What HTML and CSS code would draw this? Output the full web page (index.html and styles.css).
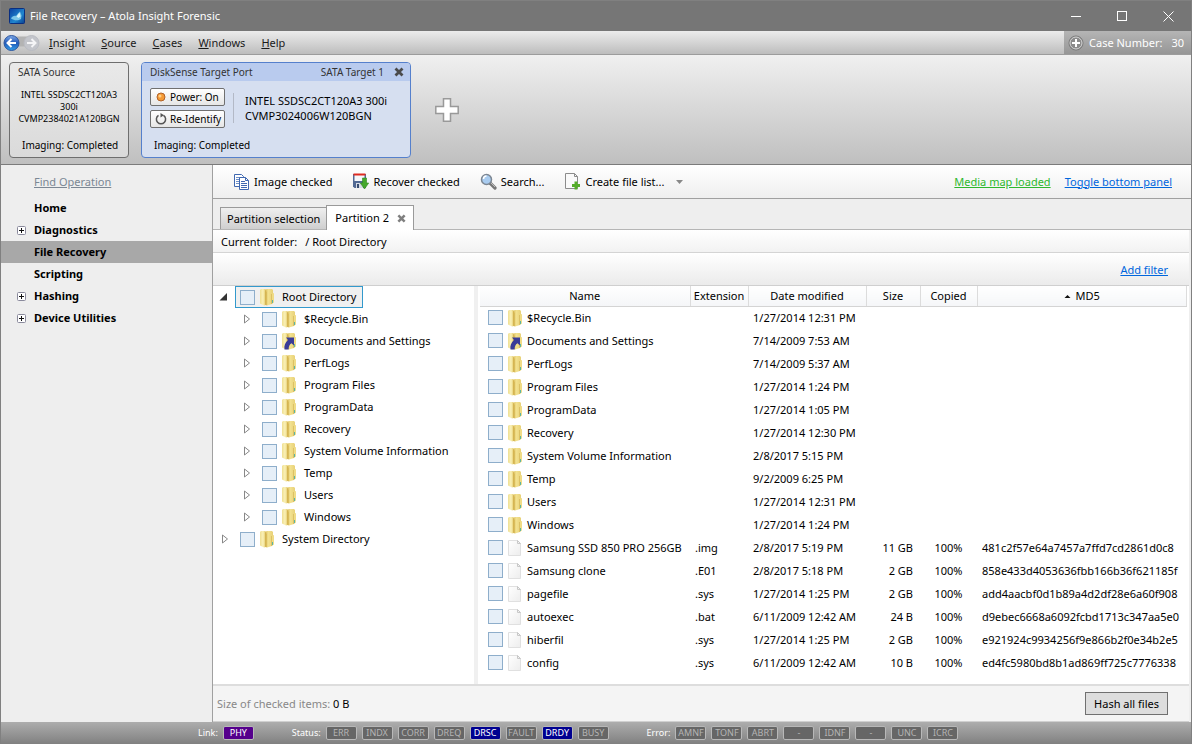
FILE: index.html
```html
<!DOCTYPE html>
<html lang="en">
  <head>
    <meta charset="UTF-8" />
    <meta name="viewport" content="width=device-width, initial-scale=1.0" />
    <title>File Recovery – Atola Insight Forensic</title>
    <link rel="stylesheet" href="styles.css">
  </head>
  <body>
    <!-- Icon sprite -->
    <svg class="sprite" width="0" height="0" aria-hidden="true">
      <defs>
        <linearGradient id="gold" x1="0" x2="1" y1="0" y2="0">
          <stop offset="0" stop-color="#efdf92" />
          <stop offset="0.5" stop-color="#faf1b8" />
          <stop offset="1" stop-color="#e0c560" />
        </linearGradient>
        <linearGradient id="goldDark" x1="0" x2="1" y1="0" y2="0">
          <stop offset="0" stop-color="#d6b652" />
          <stop offset="0.4" stop-color="#f3e290" />
          <stop offset="1" stop-color="#e8d178" />
        </linearGradient>
        <linearGradient id="paper" x1="0" x2="1" y1="0" y2="1">
          <stop offset="0" stop-color="#ffffff" />
          <stop offset="1" stop-color="#ededed" />
        </linearGradient>
        <linearGradient id="blueBall" x1="0" x2="0" y1="0" y2="1">
          <stop offset="0" stop-color="#7fa9e6" />
          <stop offset="0.5" stop-color="#2058b8" />
          <stop offset="1" stop-color="#35a0e8" />
        </linearGradient>
        <linearGradient id="appBlue" x1="0" x2="1" y1="0" y2="1">
          <stop offset="0" stop-color="#0b3fa0" />
          <stop offset="0.6" stop-color="#1f86cf" />
          <stop offset="1" stop-color="#0a3f8e" />
        </linearGradient>
      </defs>
      <symbol id="folder" viewBox="0 0 16 18">
        <path d="M1 2L2 1H6L7 2V17L5 17.500 1 15.500z" fill="url(#gold)" />
        <path d="M6 2L8 1h5l1 1V15l-1 1-5 1.500-2-1z" fill="url(#goldDark)" />
        <path d="M6 2.500L8 4V17.500L6 16.500z" fill="#d0ae48" opacity=".5" />
        <path d="M12 6l3-1V14.500L12 16z" fill="#f0dc86" />
        <path d="M12.500 6v10" stroke="#dcc164" />
        <path d="M13 12h1v3h-1z" fill="#5bb5a5" />
      </symbol>
      <symbol id="folder-link" viewBox="0 0 16 18">
        <use href="#folder" width="16" height="18" />
        <path d="M5 5.500h8v8l-2.500-2.300C8.500 12.500 7.500 14.500 7.600 17.500H3.500C2.800 13.500 4.300 10.700 7 8z" fill="#3a3c98" />
      </symbol>
      <symbol id="file" viewBox="0 0 16 18">
        <path d="M1.500 1.500H10.500L13.500 4.500V16.500H1.500z" fill="url(#paper)" stroke="#e0e0e0" />
        <path d="M10.500 1.500v3h3z" fill="#f4f4f4" stroke="#c8c8c8" />
      </symbol>
      <symbol id="closed" viewBox="0 0 10 11">
        <path d="M3.500 1V9L8.500 5z" fill="#fff" stroke="#888" />
      </symbol>
      <symbol id="opened" viewBox="0 0 10 11">
        <path d="M8 1V8.500H0.500z" fill="#333" />
      </symbol>
      <symbol id="cross" viewBox="0 0 10 10">
        <path d="M1.500 1.500l7 7M8.500 1.500l-7 7" stroke="currentColor" stroke-width="2.800" fill="none" />
      </symbol>
      <symbol id="expand" viewBox="0 0 9 9">
        <rect x="0.500" y="0.500" width="8" height="8" rx="1" fill="#fff" stroke="#8a8a9c" />
        <path d="M2 4.500h5M4.500 2v5" stroke="#111" />
      </symbol>
    </svg>

    <header class="titlebar">
      <svg class="app-icon" viewBox="0 0 16 16" aria-hidden="true">
        <rect x="0.500" y="0.500" width="15" height="15" rx="1" fill="url(#appBlue)" stroke="#0a2f80" />
        <path d="M2 10.500C3 8.500 5 7.500 7 8L9 5.500 11 3.500l1.500 4-.5 3.500C9 13 5 12.500 2 10.500z" fill="#7cc6e8" />
        <path d="M7.500 8.500L10.500 4.500l1 4-2 1.500z" fill="#d8f5fc" />
      </svg>
      <h1>File Recovery – Atola Insight Forensic</h1>
      <div class="window-buttons">
        <button type="button" aria-label="Minimize">
          <svg width="11" height="11"><path d="M0 5.500h10" stroke="#fff" /></svg>
        </button>
        <button type="button" aria-label="Maximize">
          <svg width="11" height="11"><rect x="0.500" y="0.500" width="9" height="9" fill="none" stroke="#fff" /></svg>
        </button>
        <button type="button" aria-label="Close">
          <svg width="11" height="11"><path d="M0.500 0.500l10 10M10.500 0.500l-10 10" stroke="#fff" /></svg>
        </button>
      </div>
    </header>

    <nav class="menubar">
      <svg class="history" viewBox="0 0 38 18" aria-hidden="true">
        <path d="M10 2.500h18v10H10z" fill="#b3b3b3" />
        <circle cx="9.500" cy="9" r="7.500" fill="url(#blueBall)" stroke="#2c56a0" />
        <path d="M14 9H6M9.500 5l-4 4 4 4" stroke="#fff" stroke-width="2" fill="none" />
        <circle cx="29.500" cy="9" r="7.500" fill="#c3c5cb" stroke="#b9bbc2" />
        <path d="M25 9h8M29.500 5l4 4-4 4" stroke="#f4f4f6" stroke-width="2" fill="none" />
      </svg>
      <a href="#"><u>I</u>nsight</a>
      <a href="#"><u>S</u>ource</a>
      <a href="#"><u>C</u>ases</a>
      <a href="#"><u>W</u>indows</a>
      <a href="#"><u>H</u>elp</a>
      <div class="case-number">
        <svg width="16" height="16" viewBox="0 0 16 16" aria-hidden="true">
          <circle cx="8" cy="8" r="7" fill="#8c8c8c" stroke="#777" />
          <circle cx="8" cy="8" r="6" fill="none" stroke="#d6d6d6" />
          <path d="M8 4v8M4 8h8" stroke="#fff" stroke-width="2" />
        </svg>
        <span>Case Number:</span>
        <span>30</span>
      </div>
    </nav>

    <section class="ports">
      <article class="port source">
        <h2>SATA Source</h2>
        <p class="model">INTEL SSDSC2CT120A3 300i CVMP2384021A120BGN</p>
        <p class="state">Imaging: Completed</p>
      </article>
      <article class="port target">
        <div class="port-head">
          <h2>DiskSense Target Port</h2>
          <span>SATA Target 1</span>
          <button type="button" class="close" aria-label="Close port">
            <svg width="10" height="10"><use href="#cross" /></svg>
          </button>
        </div>
        <div class="port-body">
          <div class="port-buttons">
            <button type="button">
              <svg width="12" height="12" viewBox="0 0 12 12"><circle cx="6" cy="6" r="4" fill="#f59a35" stroke="#b0622a" /><circle cx="5" cy="5" r="1.500" fill="#ffd089" /></svg>
              Power: On
            </button>
            <button type="button">
              <svg width="12" height="12" viewBox="0 0 12 12"><path d="M8.500 2.300A4.600 4.600 0 1 1 3.500 2.300" fill="none" stroke="#555" stroke-width="1.500" /><path d="M5.500 0v4.500L9 2.200z" fill="#555" /></svg>
              Re-Identify
            </button>
          </div>
          <p class="model">INTEL SSDSC2CT120A3 300i<br>CVMP3024006W120BGN</p>
        </div>
        <p class="state">Imaging: Completed</p>
      </article>
      <button type="button" class="add-port" aria-label="Add port">
        <svg width="24" height="24" viewBox="0 0 24 24"><path d="M8.500 0.800h7v7.700h7.700v7h-7.700v7.700h-7v-7.700H0.800v-7h7.700z" fill="#fff" stroke="#999" stroke-width="1.500" /></svg>
      </button>
    </section>

    <main class="workspace">
      <aside class="sidebar">
        <a class="find" href="#">Find Operation</a>
        <ul>
          <li><a href="#">Home</a></li>
          <li><svg><use href="#expand" /></svg><a href="#">Diagnostics</a></li>
          <li class="current"><a href="#">File Recovery</a></li>
          <li><a href="#">Scripting</a></li>
          <li><svg><use href="#expand" /></svg><a href="#">Hashing</a></li>
          <li><svg><use href="#expand" /></svg><a href="#">Device Utilities</a></li>
        </ul>
      </aside>

      <section class="content">
        <div class="toolbar">
          <button type="button">
            <svg width="17" height="18" viewBox="0 0 17 18">
              <path d="M1.500 1.500h7l2 2v10h-9z" fill="#fff" stroke="#4068b0" />
              <path d="M3 4.500h4M3 6.500h4M3 8.500h4M3 10.500h4" stroke="#6f90c8" />
              <path d="M6.500 4.500h6l3 3v9h-9z" fill="#fff" stroke="#4068b0" />
              <path d="M12.500 4.500v3h3M8 8.500h4M8 10.500h6M8 12.500h6M8 14.500h6" fill="none" stroke="#4068b0" />
            </svg>
            Image checked
          </button>
          <button type="button">
            <svg width="17" height="17" viewBox="0 0 17 17">
              <path d="M1 1h13v14H2.500L1 13.500z" fill="#526a94" />
              <path d="M2.500 2h10v6h-10z" fill="#f5f7fa" />
              <path d="M1.500 0.500h12v2h-12z" fill="#e02b20" />
              <path d="M4 10h7v5H4z" fill="#d5dbe5" /><path d="M5 11h2v4H5z" fill="#394d70" />
              <path d="M10.500 5h4v5h2.200L12.500 16 8.300 10h2.200z" fill="#45a82c" stroke="#2f8a20" stroke-width=".6" />
            </svg>
            Recover checked
          </button>
          <button type="button">
            <svg width="17" height="17" viewBox="0 0 17 17">
              <path d="M10 10l5 5" stroke="#777" stroke-width="3.200" stroke-linecap="round" />
              <path d="M10.500 9.500l4.500 4.500" stroke="#bbb" stroke-width="1" />
              <circle cx="6.500" cy="6.500" r="5" fill="#a9ccf0" stroke="#7d8793" stroke-width="1.500" />
              <path d="M3.500 6a3 3 0 0 1 3-3" fill="none" stroke="#fff" stroke-width="1.500" />
            </svg>
            Search...
          </button>
          <button type="button">
            <svg width="17" height="17" viewBox="0 0 17 17">
              <path d="M1.500 0.500h9l3 3v12h-12z" fill="#fafafa" stroke="#8c8c8c" />
              <path d="M10.500 0.500v3h3" fill="none" stroke="#8c8c8c" />
              <path d="M12 8.500v8M8 12.500h8" stroke="#55ad2a" stroke-width="3" />
            </svg>
            Create file list...
            <svg class="drop" width="7" height="4"><path d="M0 0h7L3.500 4z" fill="#888" /></svg>
          </button>
          <a class="map" href="#">Media map loaded</a>
          <a href="#">Toggle bottom panel</a>
        </div>

        <div class="tabs">
          <button type="button" class="tab">Partition selection</button>
          <button type="button" class="tab active">
            Partition 2
            <svg width="9" height="9" viewBox="0 0 10 10"><use href="#cross" /></svg>
          </button>
        </div>

        <div class="panel">
          <div class="path"><span>Current folder:</span><span>/ Root Directory</span></div>
          <div class="filter"><a href="#">Add filter</a></div>

          <div class="split">
            <ul class="tree">
              <li>
                <div class="node">
                  <svg class="arrow"><use href="#opened" /></svg>
                  <label class="selected"><input type="checkbox"><svg class="icon"><use href="#folder" /></svg>Root Directory</label>
                </div>
                <ul>
                  <li class="node"><svg class="arrow"><use href="#closed" /></svg><label><input type="checkbox"><svg class="icon"><use href="#folder" /></svg>$Recycle.Bin</label></li>
                  <li class="node"><svg class="arrow"><use href="#closed" /></svg><label><input type="checkbox"><svg class="icon"><use href="#folder-link" /></svg>Documents and Settings</label></li>
                  <li class="node"><svg class="arrow"><use href="#closed" /></svg><label><input type="checkbox"><svg class="icon"><use href="#folder" /></svg>PerfLogs</label></li>
                  <li class="node"><svg class="arrow"><use href="#closed" /></svg><label><input type="checkbox"><svg class="icon"><use href="#folder" /></svg>Program Files</label></li>
                  <li class="node"><svg class="arrow"><use href="#closed" /></svg><label><input type="checkbox"><svg class="icon"><use href="#folder" /></svg>ProgramData</label></li>
                  <li class="node"><svg class="arrow"><use href="#closed" /></svg><label><input type="checkbox"><svg class="icon"><use href="#folder" /></svg>Recovery</label></li>
                  <li class="node"><svg class="arrow"><use href="#closed" /></svg><label><input type="checkbox"><svg class="icon"><use href="#folder" /></svg>System Volume Information</label></li>
                  <li class="node"><svg class="arrow"><use href="#closed" /></svg><label><input type="checkbox"><svg class="icon"><use href="#folder" /></svg>Temp</label></li>
                  <li class="node"><svg class="arrow"><use href="#closed" /></svg><label><input type="checkbox"><svg class="icon"><use href="#folder" /></svg>Users</label></li>
                  <li class="node"><svg class="arrow"><use href="#closed" /></svg><label><input type="checkbox"><svg class="icon"><use href="#folder" /></svg>Windows</label></li>
                </ul>
              </li>
              <li class="node"><svg class="arrow"><use href="#closed" /></svg><label><input type="checkbox"><svg class="icon"><use href="#folder" /></svg>System Directory</label></li>
            </ul>

            <div class="files">
              <table>
                <colgroup>
                  <col class="col-name"><col class="col-ext"><col class="col-date">
                  <col class="col-size"><col class="col-copied"><col>
                </colgroup>
                <thead>
                  <tr>
                    <th>Name</th><th>Extension</th><th>Date modified</th><th>Size</th><th>Copied</th>
                    <th><svg class="sort" width="7" height="4"><path d="M0.500 4h6L3.500 1z" fill="#111" /></svg>MD5</th>
                  </tr>
                </thead>
                <tbody>
                  <tr><td><label><input type="checkbox"><svg class="icon"><use href="#folder" /></svg>$Recycle.Bin</label></td><td></td><td>1/27/2014 12:31 PM</td><td></td><td></td><td></td></tr>
                  <tr><td><label><input type="checkbox"><svg class="icon"><use href="#folder-link" /></svg>Documents and Settings</label></td><td></td><td>7/14/2009 7:53 AM</td><td></td><td></td><td></td></tr>
                  <tr><td><label><input type="checkbox"><svg class="icon"><use href="#folder" /></svg>PerfLogs</label></td><td></td><td>7/14/2009 5:37 AM</td><td></td><td></td><td></td></tr>
                  <tr><td><label><input type="checkbox"><svg class="icon"><use href="#folder" /></svg>Program Files</label></td><td></td><td>1/27/2014 1:24 PM</td><td></td><td></td><td></td></tr>
                  <tr><td><label><input type="checkbox"><svg class="icon"><use href="#folder" /></svg>ProgramData</label></td><td></td><td>1/27/2014 1:05 PM</td><td></td><td></td><td></td></tr>
                  <tr><td><label><input type="checkbox"><svg class="icon"><use href="#folder" /></svg>Recovery</label></td><td></td><td>1/27/2014 12:30 PM</td><td></td><td></td><td></td></tr>
                  <tr><td><label><input type="checkbox"><svg class="icon"><use href="#folder" /></svg>System Volume Information</label></td><td></td><td>2/8/2017 5:15 PM</td><td></td><td></td><td></td></tr>
                  <tr><td><label><input type="checkbox"><svg class="icon"><use href="#folder" /></svg>Temp</label></td><td></td><td>9/2/2009 6:25 PM</td><td></td><td></td><td></td></tr>
                  <tr><td><label><input type="checkbox"><svg class="icon"><use href="#folder" /></svg>Users</label></td><td></td><td>1/27/2014 12:31 PM</td><td></td><td></td><td></td></tr>
                  <tr><td><label><input type="checkbox"><svg class="icon"><use href="#folder" /></svg>Windows</label></td><td></td><td>1/27/2014 1:24 PM</td><td></td><td></td><td></td></tr>
                  <tr><td><label><input type="checkbox"><svg class="icon"><use href="#file" /></svg>Samsung SSD 850 PRO 256GB</label></td><td>.img</td><td>2/8/2017 5:19 PM</td><td>11 GB</td><td>100%</td><td>481c2f57e64a7457a7ffd7cd2861d0c8</td></tr>
                  <tr><td><label><input type="checkbox"><svg class="icon"><use href="#file" /></svg>Samsung clone</label></td><td>.E01</td><td>2/8/2017 5:18 PM</td><td>2 GB</td><td>100%</td><td>858e433d4053636fbb166b36f621185f</td></tr>
                  <tr><td><label><input type="checkbox"><svg class="icon"><use href="#file" /></svg>pagefile</label></td><td>.sys</td><td>1/27/2014 1:25 PM</td><td>2 GB</td><td>100%</td><td>add4aacbf0d1b89a4d2df28e6a60f908</td></tr>
                  <tr><td><label><input type="checkbox"><svg class="icon"><use href="#file" /></svg>autoexec</label></td><td>.bat</td><td>6/11/2009 12:42 AM</td><td>24 B</td><td>100%</td><td>d9ebec6668a6092fcbd1713c347aa5e0</td></tr>
                  <tr><td><label><input type="checkbox"><svg class="icon"><use href="#file" /></svg>hiberfil</label></td><td>.sys</td><td>1/27/2014 1:25 PM</td><td>2 GB</td><td>100%</td><td>e921924c9934256f9e866b2f0e34b2e5</td></tr>
                  <tr><td><label><input type="checkbox"><svg class="icon"><use href="#file" /></svg>config</label></td><td>.sys</td><td>6/11/2009 12:42 AM</td><td>10 B</td><td>100%</td><td>ed4fc5980bd8b1ad869ff725c7776338</td></tr>
                </tbody>
              </table>
            </div>
          </div>

          <div class="summary">
            <p>Size of checked items: <b>0 B</b></p>
            <button type="button">Hash all files</button>
          </div>
        </div>
      </section>
    </main>

    <footer class="statusbar">
      <div class="flags"><span>Link:</span><i class="phy">PHY</i></div>
      <div class="flags">
        <span>Status:</span>
        <i>ERR</i><i>INDX</i><i>CORR</i><i>DREQ</i><i class="on">DRSC</i><i>FAULT</i><i class="on">DRDY</i><i>BUSY</i>
      </div>
      <div class="flags">
        <span>Error:</span>
        <i>AMNF</i><i>TONF</i><i>ABRT</i><i>-</i><i>IDNF</i><i>-</i><i>UNC</i><i>ICRC</i>
      </div>
    </footer>
  </body>
</html>
```
FILE: styles.css
```css
* {
  box-sizing: border-box;
}

body {
  margin: 0;
  min-height: 100vh;
  display: flex;
  flex-direction: column;
  border: 1px solid #808080;
  border-bottom: 0;
  background: #eeeeee;
  color: #000;
  font-family: "Noto Sans", "Open Sans", sans-serif;
  font-size: 11px;
  line-height: 16px;
}

h1,
h2,
p,
ul {
  margin: 0;
  padding: 0;
  font-size: inherit;
  font-weight: normal;
}

ul {
  list-style: none;
}

button {
  font: inherit;
  color: inherit;
  background: none;
  border: 0;
  padding: 0;
}

svg {
  display: block;
  flex: none;
}

a {
  color: #0066dd;
}

/* Title bar */
.titlebar {
  display: flex;
  align-items: center;
  height: 30px;
  padding-left: 8px;
  background: #767676;
  color: #fff;
}

.app-icon {
  width: 16px;
  height: 16px;
  margin-right: 5px;
}

.window-buttons {
  display: flex;
  margin-left: auto;
}

.window-buttons button {
  width: 46px;
  height: 30px;
  display: flex;
  align-items: center;
  justify-content: center;
}

/* Menu */
.menubar {
  display: flex;
  align-items: center;
  gap: 16px;
  height: 24px;
  padding-left: 1px;
  background: linear-gradient(#ececec, #bdbdbd);
  border-bottom: 1px solid #9c9c9c;
}

.menubar a {
  color: #1a1a1a;
  text-decoration: none;
}

.history {
  width: 38px;
  height: 18px;
  margin-right: -7px;
}

.case-number {
  display: flex;
  align-items: center;
  gap: 5px;
  height: 23px;
  margin-left: auto;
  padding: 0 7px 0 4px;
  background: linear-gradient(#b5b5b5, #969696);
  color: #fff;
}

.case-number span:last-child {
  margin-left: 4px;
}

/* Ports */
.ports {
  display: flex;
  align-items: center;
  gap: 12px;
  height: 110px;
  padding: 0 8px;
  background: linear-gradient(#f0f0f0, #bfbfbf);
  border-bottom: 1px solid #7b7b7b;
}

.port {
  display: flex;
  flex-direction: column;
  height: 96px;
  border-radius: 4px;
  font-size: 10px;
  line-height: 12px;
}

.port h2 {
  line-height: 18px;
  color: #333;
}

.port .state {
  margin-top: auto;
  padding: 0 12px 6px;
  white-space: nowrap;
}

.source {
  width: 120px;
  border: 1px solid #6e6e6e;
  background: linear-gradient(#e9e9e9, #dadada);
}

.source h2 {
  padding-left: 8px;
}

.source .model {
  margin-top: 8px;
  padding: 0 6px;
  font-size: 9px;
  text-align: center;
}

.target {
  width: 270px;
  border: 1px solid #5580cc;
  background: #d6dff0;
}

.port-head {
  display: flex;
  align-items: center;
  gap: 10px;
  height: 18px;
  padding: 0 6px 0 8px;
  border-radius: 3px 3px 0 0;
  background: #b9cbee;
  color: #333;
}

.port-head span {
  margin-left: auto;
}

.close {
  color: #4a4a4a;
}

.port-body {
  display: flex;
  align-items: center;
  gap: 8px;
  padding: 7px 8px 0;
}

.port-buttons {
  display: flex;
  flex-direction: column;
  gap: 4px;
}

.port-buttons button {
  display: flex;
  align-items: center;
  gap: 3px;
  width: 75px;
  height: 18px;
  padding-left: 4px;
  border: 1px solid #707070;
  border-radius: 2px;
  background: linear-gradient(#fff, #e6e6e6);
}

.port-body .model {
  padding-left: 11px;
  border-left: 1px solid #b3b9c6;
  font-size: 11px;
  line-height: 15px;
}

.add-port {
  margin-left: 12px;
}

/* Workspace */
.workspace {
  flex: 1;
  display: flex;
}

.sidebar {
  width: 212px;
  border-right: 1px solid #a0a0a0;
}

.find {
  display: block;
  padding: 9px 0 7px 33px;
  color: #7b8794;
}

.sidebar li {
  display: flex;
  align-items: center;
  height: 22px;
  padding-left: 33px;
  font-weight: bold;
}

.sidebar li a {
  color: #000;
  text-decoration: none;
}

.sidebar li svg {
  width: 9px;
  height: 9px;
  margin: 0 8px 0 -17px;
}

.sidebar .current {
  background: #a8a8a8;
}

.content {
  flex: 1;
  min-width: 0;
  display: flex;
  flex-direction: column;
}

.toolbar {
  display: flex;
  align-items: center;
  gap: 20px;
  height: 34px;
  padding: 0 19px 0 20px;
  background: linear-gradient(#ffffff, #efefef);
  border-bottom: 1px solid #a0a0a0;
}

.toolbar button {
  display: flex;
  align-items: center;
  gap: 4px;
}

.toolbar .drop {
  margin-left: 8px;
}

.toolbar .map {
  margin-left: auto;
  color: #2eb82e;
}

.toolbar a + a {
  margin-left: -6px;
}

.tabs {
  display: flex;
  align-items: flex-end;
  height: 31px;
  padding-left: 7px;
  border-bottom: 1px solid #b5b5b5;
}

.tab {
  height: 22px;
  padding: 0 6px;
  border: 1px solid #9a9a9a;
  border-width: 1px 0 0 1px;
  background: linear-gradient(#efefef, #cfcfcf);
}

.tab.active {
  display: flex;
  align-items: center;
  gap: 8px;
  height: 25px;
  margin-bottom: -1px;
  padding: 0 7px 0 8px;
  border-width: 1px 1px 0;
  background: #fff;
}

.tab svg {
  color: #808080;
}

.panel {
  flex: 1;
  display: flex;
  flex-direction: column;
  margin-right: 2px;
}

.path {
  display: flex;
  gap: 8px;
  height: 23px;
  padding: 4px 8px;
  background: linear-gradient(#ffffff, #f2f2f2);
  border-bottom: 1px solid #d4d4d4;
}

.filter {
  height: 33px;
  padding: 9px 21px 0;
  text-align: right;
  background: linear-gradient(#ffffff, #ebebeb);
  border-bottom: 1px solid #cfcfcf;
}

.split {
  flex: 1;
  display: flex;
  background: #fff;
}

input[type="checkbox"] {
  appearance: none;
  flex: none;
  width: 15px;
  height: 15px;
  margin: 0;
  border: 1px solid #8eaecb;
  background: #e6eff8;
}

.icon {
  width: 16px;
  height: 18px;
}

/* Folder tree */
.tree {
  width: 265px;
  padding-left: 6px;
  border-right: 4px solid #f0f0f0;
}

.tree ul {
  padding-left: 22px;
}

.node {
  display: flex;
  align-items: center;
  gap: 6px;
  height: 22px;
}

.arrow {
  width: 10px;
  height: 11px;
}

.node label {
  display: flex;
  align-items: center;
  height: 22px;
  padding: 0 6px 0 4px;
  border: 1px solid transparent;
}

.node label.selected {
  border-color: #3399cc;
  background: #f0f0f0;
}

.node .icon {
  margin: 0 7px 0 4px;
}

/* File list */
.files {
  flex: 1;
  min-width: 0;
  padding: 0 2px;
}

table {
  width: 100%;
  table-layout: fixed;
  border-collapse: collapse;
  white-space: nowrap;
}

.col-name {
  width: 210px;
}

.col-ext {
  width: 58px;
}

.col-date {
  width: 118px;
}

.col-size {
  width: 54px;
}

.col-copied {
  width: 57px;
}

th {
  height: 20px;
  padding: 0;
  font-weight: normal;
  border-right: 1px solid #dcdcdc;
  border-bottom: 1px solid #d4d4d4;
  background: linear-gradient(#ffffff, #f5f6f8);
}

.sort {
  display: inline-block;
  margin: 0 5px 2px 0;
}

td {
  height: 23px;
  padding: 0 5px;
}

td label {
  display: flex;
  align-items: center;
  gap: 4px;
  padding-left: 3px;
}

td:nth-child(4) {
  padding-right: 7px;
  text-align: right;
}

td:nth-child(5) {
  padding: 0;
  text-align: center;
}

.summary {
  display: flex;
  align-items: center;
  justify-content: space-between;
  height: 38px;
  padding: 0 21px 0 4px;
  background: #f4f4f4;
  border-top: 2px solid #dddddd;
  border-bottom: 1px solid #d0d0d0;
  color: #888;
}

.summary b {
  font-weight: normal;
  color: #000;
}

.summary button {
  height: 23px;
  padding: 0 8px;
  border: 1px solid #707070;
  background: #dddddd;
  color: #000;
}

/* Status bar */
.statusbar {
  display: flex;
  align-items: center;
  gap: 38px;
  height: 22px;
  padding-left: 197px;
  background: linear-gradient(#adadad, #808080);
  color: #fff;
  font-size: 9px;
  line-height: 12px;
}

.flags {
  display: flex;
  align-items: center;
  gap: 5px;
}

.flags i {
  width: 31px;
  height: 14px;
  border: 1px solid #b8b8b8;
  border-radius: 2px;
  background: #666;
  color: #b5b5b5;
  font-style: normal;
  text-align: center;
}

.flags .phy {
  background: #55008c;
  color: #fff;
}

.flags .on {
  background: #000090;
  color: #fff;
}
```
